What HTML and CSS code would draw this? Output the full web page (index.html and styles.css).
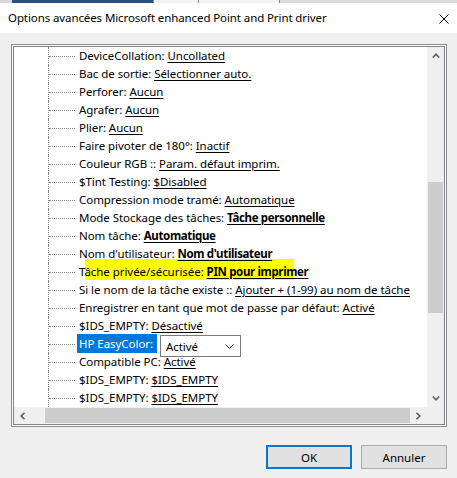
FILE: index.html
```html
<!DOCTYPE html>
<html lang="fr">
<head>
<meta charset="utf-8">
<link rel="stylesheet" href="styles.css">
</head>
<body>
<div class="window">
  <div class="topstrip"><span class="ts-a"></span><span class="ts-b"></span><span class="ts-c"></span><span class="ts-d"></span></div>
  <div class="titlebar">
    <span class="title">Options avancées Microsoft enhanced Point and Print driver</span>
    <svg class="close" width="10" height="10" viewBox="0 0 10 10"><path d="M0.5 0.5 L9.5 9.5 M9.5 0.5 L0.5 9.5" stroke="#000" stroke-width="1" fill="none"/></svg>
  </div>
  <div class="body">
    <div class="frame">
      <div class="inner">
        <div class="tree">
          <div class="row"><span class="branch"></span><span class="label">DeviceCollation: <u>Uncollated</u></span></div>
          <div class="row"><span class="branch"></span><span class="label">Bac de sortie: <u>Sélectionner auto.</u></span></div>
          <div class="row"><span class="branch"></span><span class="label">Perforer: <u>Aucun</u></span></div>
          <div class="row"><span class="branch"></span><span class="label">Agrafer: <u>Aucun</u></span></div>
          <div class="row"><span class="branch"></span><span class="label">Plier: <u>Aucun</u></span></div>
          <div class="row"><span class="branch"></span><span class="label">Faire pivoter de 180°: <u>Inactif</u></span></div>
          <div class="row"><span class="branch"></span><span class="label">Couleur RGB :: <u>Param. défaut imprim.</u></span></div>
          <div class="row"><span class="branch"></span><span class="label">$Tint Testing: <u>$Disabled</u></span></div>
          <div class="row"><span class="branch"></span><span class="label">Compression mode tramé: <u>Automatique</u></span></div>
          <div class="row"><span class="branch"></span><span class="label">Mode Stockage des tâches: <u class="b">Tâche personnelle</u></span></div>
          <div class="row"><span class="branch"></span><span class="label">Nom tâche: <u class="b">Automatique</u></span></div>
          <div class="row"><span class="branch"></span><span class="label">Nom d'utilisateur: <u class="b">Nom d'utilisateur</u></span></div>
          <div class="row marked"><span class="branch"></span><span class="label">Tâche privée/sécurisée: <u class="b">PIN pour imprimer</u></span></div>
          <div class="row"><span class="branch"></span><span class="label">Si le nom de la tâche existe :: <u>Ajouter + (1-99) au nom de tâche</u></span></div>
          <div class="row"><span class="branch"></span><span class="label">Enregistrer en tant que mot de passe par défaut: <u>Activé</u></span></div>
          <div class="row"><span class="branch"></span><span class="label">$IDS_EMPTY: <u>Désactivé</u></span></div>
          <div class="row"><span class="branch"></span><span class="label selected">HP EasyColor:</span><span class="select"><span class="sel-text">Activé</span><svg class="sel-arrow" width="9" height="5" viewBox="0 0 9 5"><path d="M0.5 0.5 L4.5 4.5 L8.5 0.5" stroke="#333" stroke-width="1" fill="none"/></svg></span></div>
          <div class="row"><span class="branch"></span><span class="label">Compatible PC: <u>Activé</u></span></div>
          <div class="row"><span class="branch"></span><span class="label">$IDS_EMPTY: <u>$IDS_EMPTY</u></span></div>
          <div class="row"><span class="branch"></span><span class="label">$IDS_EMPTY: <u>$IDS_EMPTY</u></span></div>
        </div>
        <div class="vscroll">
          <span class="sbtn"><svg width="8" height="5" viewBox="0 0 8 5"><path d="M0.8 4.5 L4 1.2 L7.2 4.5" stroke="#606060" stroke-width="1.6" fill="none"/></svg></span>
          <span class="vtrack"><span class="vthumb"></span></span>
          <span class="sbtn"><svg width="8" height="5" viewBox="0 0 8 5"><path d="M0.8 0.5 L4 3.8 L7.2 0.5" stroke="#606060" stroke-width="1.6" fill="none"/></svg></span>
        </div>
        <div class="hscroll">
          <span class="sbtn"><svg width="5" height="8" viewBox="0 0 5 8"><path d="M4.5 0.8 L1.2 4 L4.5 7.2" stroke="#606060" stroke-width="1.6" fill="none"/></svg></span>
          <span class="htrack"><span class="hthumb"></span></span>
          <span class="sbtn"><svg width="5" height="8" viewBox="0 0 5 8"><path d="M0.5 0.8 L3.8 4 L0.5 7.2" stroke="#606060" stroke-width="1.6" fill="none"/></svg></span>
        </div>
        <div class="corner"></div>
      </div>
    </div>
    <div class="buttons">
      <button class="btn default">OK</button>
      <button class="btn">Annuler</button>
    </div>
  </div>
</div>
</body>
</html>
```
FILE: styles.css
```css
* { box-sizing: border-box; }
html, body { margin: 0; padding: 0; }
body {
  width: 457px;
  height: 478px;
  overflow: hidden;
  background: #f0f0f0;
  font-family: "Noto Sans", "Open Sans", sans-serif;
  font-size: 11.5px;
  color: #000;
}
.window { display: flex; flex-direction: column; height: 478px; }

.topstrip { height: 3px; display: flex; background: #dcdcdc; }
.ts-a { width: 12px; background: #d8d8d8; }
.ts-b { width: 141px; background: #2c4f84; }
.ts-c { width: 46px; background: #f4f4f4; border-left: 1px solid #8a8a8a; border-right: 1px solid #8a8a8a; }
.ts-d { width: 81px; background: #f4f4f4; border-right: 1px solid #8a8a8a; }

.titlebar {
  height: 30px;
  background: #fff;
  display: flex;
  align-items: center;
  justify-content: space-between;
  padding: 0 8px 0 8px;
}
.title { font-size: 11.5px; line-height: 16px; letter-spacing: -0.1px; }
.close { display: block; margin-top: 1px; }

.body { flex: 1; display: flex; flex-direction: column; padding: 11px 10px 0 11px; }

.frame {
  height: 383px;
  border: 1px solid #8c8c8c;
  padding: 1px;
  background: #fff;
}
.inner {
  height: 100%;
  border: 1px solid #7f838a;
  display: grid;
  grid-template-columns: 1fr 17px;
  grid-template-rows: 1fr 17px;
}

.tree {
  background: #fff;
  overflow: hidden;
  position: relative;
  z-index: 0;
  letter-spacing: -0.05px;
}
.row {
  height: 18px;
  display: flex;
  align-items: center;
  white-space: nowrap;
  position: relative;
}
.branch {
  align-self: stretch;
  width: 27px;
  margin-left: 34px;
  margin-right: 4px;
  border-left: 1px dotted #8a8a8a;
  display: flex;
  align-items: center;
  flex: none;
}
.branch::after {
  content: "";
  flex: 1;
  border-top: 1px dotted #8a8a8a;
  margin-top: 1px;
}
.label { line-height: 16px; }
u { text-underline-offset: 2px; text-decoration-thickness: 1px; }
.b { font-weight: bold; letter-spacing: -0.35px; }

.marked::before {
  content: "";
  position: absolute;
  left: 71px;
  top: -4px;
  width: 209px;
  height: 21px;
  background: #ffff00;
  z-index: -1;
}

.selected {
  background: #0078d7;
  color: #fff;
  margin-left: -2px;
  padding: 0 2px;
  width: 80px;
  height: 19px;
  line-height: 19px;
  align-self: flex-start;
  margin-top: -1px;
}
.select {
  align-self: flex-start;
  margin-left: 3px;
  width: 81px;
  height: 22px;
  border: 1px solid #7a7a7a;
  background: #fff;
  display: flex;
  align-items: center;
  justify-content: space-between;
  padding: 0 6px 0 5px;
}
.sel-text { line-height: 16px; margin-top: 1px; }
.sel-arrow { display: block; }

.vscroll { background: #f0f0f0; display: flex; flex-direction: column; }
.hscroll { background: #f0f0f0; display: flex; }
.sbtn { width: 17px; height: 17px; flex: none; display: flex; align-items: center; justify-content: center; }
.sbtn svg { display: block; }
.vtrack { flex: 1; display: flex; flex-direction: column; }
.vthumb { margin: 118px 1px 0 1px; height: 131px; background: #cdcdcd; }
.htrack { flex: 1; display: flex; }
.hthumb { margin: 1px 0 1px 14px; flex: 1; background: #cdcdcd; }
.corner { background: #f0f0f0; }

.buttons {
  display: flex;
  justify-content: flex-end;
  gap: 9px;
  margin-top: 18px;
}
.btn {
  width: 86px;
  height: 24px;
  background: #e1e1e1;
  border: 1px solid #adadad;
  font-family: "Noto Sans", "Open Sans", sans-serif;
  font-size: 11.5px;
  color: #000;
  padding: 0;
  margin: 0;
}
.btn.default { border: 2px solid #0078d7; }
```
